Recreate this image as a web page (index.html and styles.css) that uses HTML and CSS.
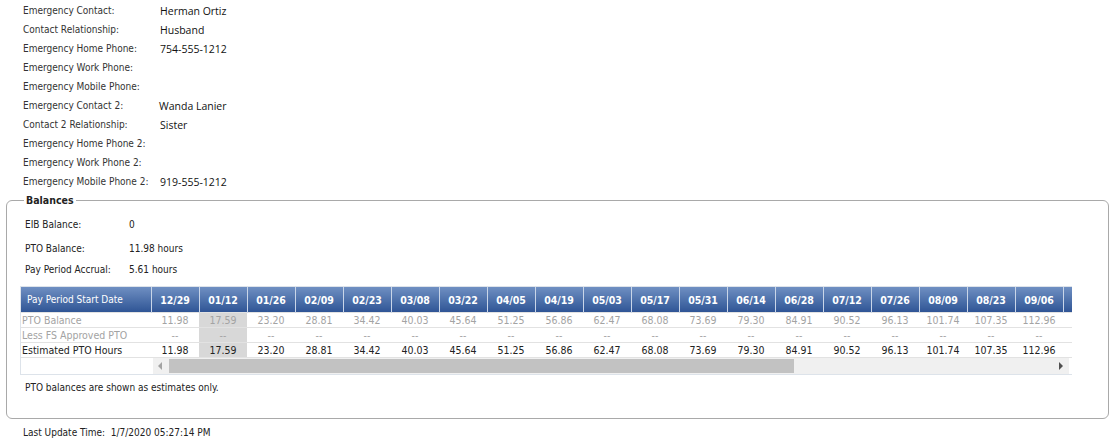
FILE: index.html
```html
<!DOCTYPE html>
<html lang="en">
  <head>
    <meta charset="UTF-8" />
    <title>Employee Details</title>
    <link rel="stylesheet" href="styles.css">
  </head>
  <body>
    <div class="contacts">
      <div class="row"><span class="label">Emergency Contact:</span><span class="value">Herman Ortiz</span></div>
      <div class="row"><span class="label">Contact Relationship:</span><span class="value">Husband</span></div>
      <div class="row"><span class="label">Emergency Home Phone:</span><span class="value">754-555-1212</span></div>
      <div class="row"><span class="label">Emergency Work Phone:</span><span class="value"></span></div>
      <div class="row"><span class="label">Emergency Mobile Phone:</span><span class="value"></span></div>
      <div class="row"><span class="label">Emergency Contact 2:</span><span class="value shift">Wanda Lanier</span></div>
      <div class="row"><span class="label">Contact 2 Relationship:</span><span class="value">Sister</span></div>
      <div class="row"><span class="label">Emergency Home Phone 2:</span><span class="value"></span></div>
      <div class="row"><span class="label">Emergency Work Phone 2:</span><span class="value"></span></div>
      <div class="row"><span class="label">Emergency Mobile Phone 2:</span><span class="value">919-555-1212</span></div>
    </div>

    <fieldset class="balances">
      <legend>Balances</legend>
      <div class="bal-row"><span class="bal-label">EIB Balance:</span><span>0</span></div>
      <div class="bal-row"><span class="bal-label">PTO Balance:</span><span>11.98 hours</span></div>
      <div class="bal-row tight"><span class="bal-label">Pay Period Accrual:</span><span>5.61 hours</span></div>

      <div class="grid-wrap">
        <table class="grid">
          <colgroup>
            <col class="first" />
            <col span="20" class="date" />
          </colgroup>
          <thead>
            <tr>
              <th class="rowhead">Pay Period Start Date</th>
              <th>12/29</th><th>01/12</th><th>01/26</th><th>02/09</th><th>02/23</th>
              <th>03/08</th><th>03/22</th><th>04/05</th><th>04/19</th><th>05/03</th>
              <th>05/17</th><th>05/31</th><th>06/14</th><th>06/28</th><th>07/12</th>
              <th>07/26</th><th>08/09</th><th>08/23</th><th>09/06</th><th></th>
            </tr>
          </thead>
          <tbody>
            <tr class="muted">
              <td class="rowhead">PTO Balance</td>
              <td>11.98</td><td class="current">17.59</td><td>23.20</td><td>28.81</td><td>34.42</td>
              <td>40.03</td><td>45.64</td><td>51.25</td><td>56.86</td><td>62.47</td>
              <td>68.08</td><td>73.69</td><td>79.30</td><td>84.91</td><td>90.52</td>
              <td>96.13</td><td>101.74</td><td>107.35</td><td>112.96</td><td></td>
            </tr>
            <tr class="muted">
              <td class="rowhead">Less FS Approved PTO</td>
              <td>--</td><td class="current">--</td><td>--</td><td>--</td><td>--</td>
              <td>--</td><td>--</td><td>--</td><td>--</td><td>--</td>
              <td>--</td><td>--</td><td>--</td><td>--</td><td>--</td>
              <td>--</td><td>--</td><td>--</td><td>--</td><td></td>
            </tr>
            <tr>
              <td class="rowhead">Estimated PTO Hours</td>
              <td>11.98</td><td class="current">17.59</td><td>23.20</td><td>28.81</td><td>34.42</td>
              <td>40.03</td><td>45.64</td><td>51.25</td><td>56.86</td><td>62.47</td>
              <td>68.08</td><td>73.69</td><td>79.30</td><td>84.91</td><td>90.52</td>
              <td>96.13</td><td>101.74</td><td>107.35</td><td>112.96</td><td></td>
            </tr>
          </tbody>
        </table>
        <div class="scroll-row">
          <div class="scroll-spacer"></div>
          <div class="scroll-track">
            <span class="arrow left"></span>
            <span class="thumb"></span>
            <span class="arrow right"></span>
          </div>
        </div>
      </div>

      <p class="note">PTO balances are shown as estimates only.</p>
    </fieldset>

    <div class="updated">Last Update Time:&nbsp; 1/7/2020 05:27:14 PM</div>
  </body>
</html>
```

FILE: styles.css
```css
body {
  margin: 0;
  padding: 0;
  background-color: #fff;
  color: #222;
  font-family: "DejaVu Sans", Verdana, sans-serif;
  font-stretch: condensed;
  font-size: 10px;
}
.contacts {
  padding: 1px 0 0 23px;
}
.row {
  display: flex;
  align-items: center;
  height: 19px;
}
.label {
  width: 137px;
  color: #333;
}
.value {
  font-family: "Open Sans", "Noto Sans", sans-serif;
  font-stretch: normal;
  font-size: 10.5px;
  color: #111;
}
.value.shift {
  margin-left: -1px;
}
.balances {
  margin: 3px 5px 0 6px;
  padding: 6px 36px 10px 13px;
  border: 1px solid #a9a9a9;
  border-radius: 6px;
}
.balances legend {
  margin-left: 4px;
  padding: 0 2px;
  font-weight: bold;
  font-size: 10.5px;
  color: #222;
}
.bal-row {
  display: flex;
  align-items: center;
  height: 24px;
  padding-left: 5px;
}
.bal-row.tight {
  height: 19px;
  margin-bottom: 7px;
}
.bal-label {
  width: 104px;
}
.grid-wrap {
  width: 1051px;
  overflow: hidden;
  border: 1px solid #dde3ea;
  border-right: none;
}
.grid {
  table-layout: fixed;
  border-collapse: collapse;
  width: 1090px;
}
.grid col.first {
  width: 130px;
}
.grid col.date {
  width: 48px;
}
.grid th {
  height: 25px;
  padding: 0;
  color: #fff;
  font-size: 10.5px;
  font-weight: bold;
  text-align: center;
  background: linear-gradient(#6f8fc2, #2f5595);
  border-left: 1px solid #c9d5e8;
}
.grid th.rowhead {
  text-align: left;
  padding-left: 6px;
  font-size: 10px;
  font-weight: normal;
  border-left: none;
}
.grid td {
  height: 14px;
  padding: 0;
  text-align: center;
  font-size: 10.5px;
  border-top: 1px solid #e2e2e2;
  white-space: nowrap;
}
.grid td.rowhead {
  text-align: left;
  padding-left: 1px;
  font-size: 10.5px;
}
.grid tr.muted td {
  color: #a3a3a3;
}
.grid td.current {
  background-color: #d8d8d8;
}
.scroll-row {
  display: flex;
  height: 16px;
  border-top: 1px solid #e2e2e2;
}
.scroll-spacer {
  width: 132px;
  flex: none;
}
.scroll-track {
  position: relative;
  width: 916px;
  background-color: #f0f0f0;
}
.thumb {
  position: absolute;
  left: 16px;
  top: 1px;
  width: 625px;
  height: 14px;
  background-color: #c2c2c2;
}
.arrow {
  position: absolute;
  top: 4px;
  width: 0;
  height: 0;
  border-top: 4px solid transparent;
  border-bottom: 4px solid transparent;
}
.arrow.left {
  left: 5px;
  border-right: 4px solid #a3a3a3;
}
.arrow.right {
  right: 6px;
  border-left: 4px solid #505050;
}
.note {
  margin: 7px 0 15px 5px;
}
.updated {
  padding: 8px 0 0 23px;
}
```
